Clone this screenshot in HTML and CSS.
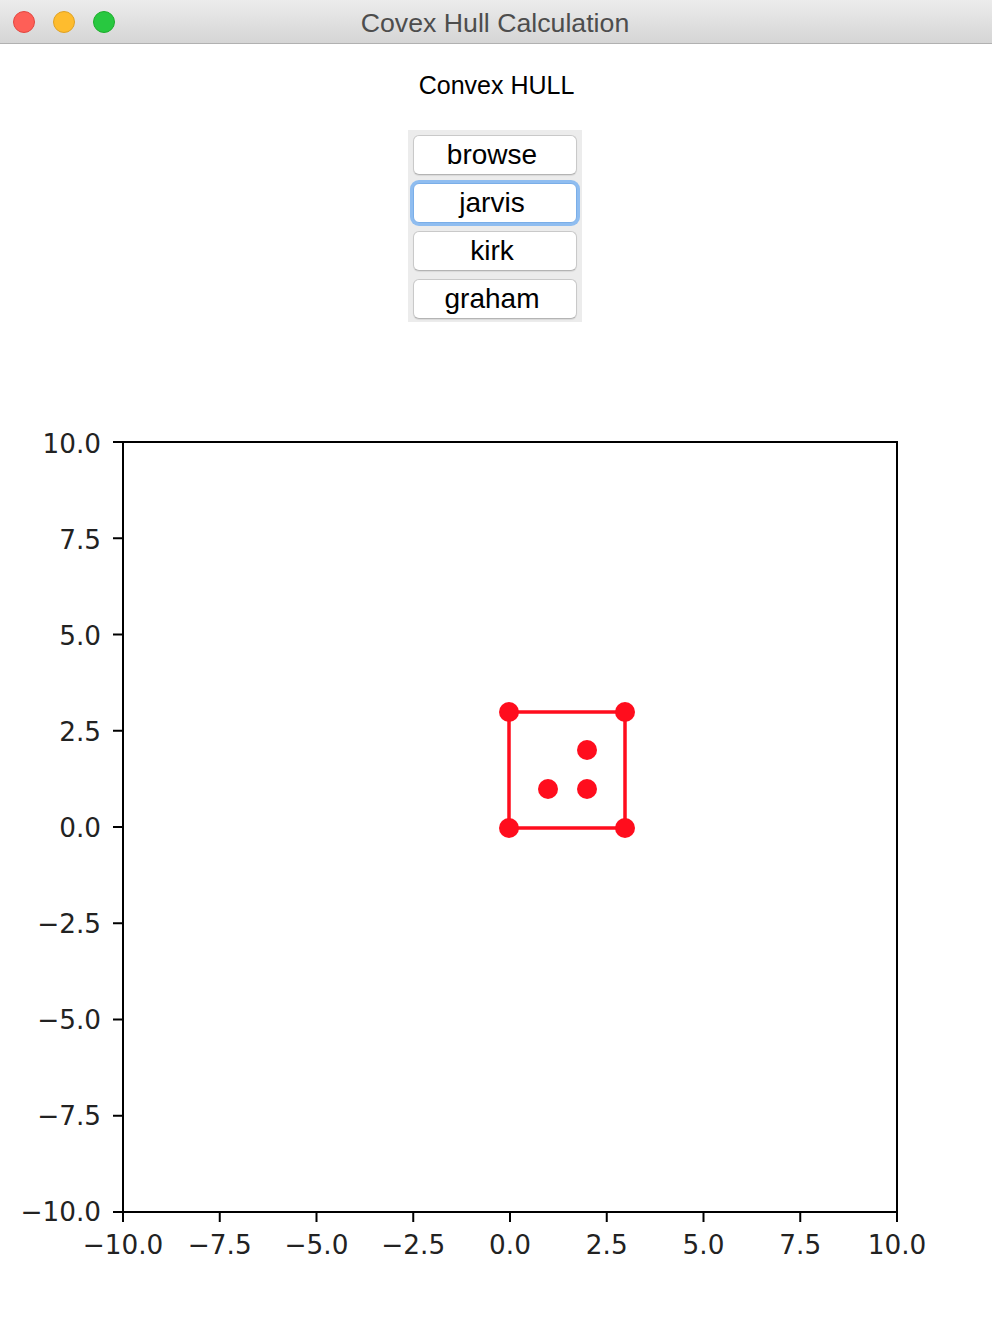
FILE: index.html
```html
<!DOCTYPE html>
<html>
<head>
<meta charset="utf-8">
<title>Covex Hull Calculation</title>
<link rel="stylesheet" href="styles.css">
</head>
<body>
<div class="window">
  <header class="titlebar">
    <div class="lights">
      <span class="light red"></span>
      <span class="light yellow"></span>
      <span class="light green"></span>
    </div>
    <div class="wtitle">Covex Hull Calculation</div>
  </header>
  <div class="label">Convex HULL</div>
  <div class="panel-wrap">
    <div class="panel">
      <button class="btn">browse</button>
      <button class="btn focus">jarvis</button>
      <button class="btn">kirk</button>
      <button class="btn">graham</button>
    </div>
  </div>
  <svg class="plot" viewBox="0 340 992 980" width="992" height="980">
    <g class="ticks">
      <line x1="113" y1="442" x2="123" y2="442"/>
      <line x1="113" y1="538.25" x2="123" y2="538.25"/>
      <line x1="113" y1="634.5" x2="123" y2="634.5"/>
      <line x1="113" y1="730.75" x2="123" y2="730.75"/>
      <line x1="113" y1="827" x2="123" y2="827"/>
      <line x1="113" y1="923.25" x2="123" y2="923.25"/>
      <line x1="113" y1="1019.5" x2="123" y2="1019.5"/>
      <line x1="113" y1="1115.75" x2="123" y2="1115.75"/>
      <line x1="113" y1="1212" x2="123" y2="1212"/>
      <line x1="123" y1="1212" x2="123" y2="1222"/>
      <line x1="219.75" y1="1212" x2="219.75" y2="1222"/>
      <line x1="316.5" y1="1212" x2="316.5" y2="1222"/>
      <line x1="413.25" y1="1212" x2="413.25" y2="1222"/>
      <line x1="510" y1="1212" x2="510" y2="1222"/>
      <line x1="606.75" y1="1212" x2="606.75" y2="1222"/>
      <line x1="703.5" y1="1212" x2="703.5" y2="1222"/>
      <line x1="800.25" y1="1212" x2="800.25" y2="1222"/>
      <line x1="897" y1="1212" x2="897" y2="1222"/>
    </g>
    <rect class="axes" x="123" y="442" width="774" height="770"/>
    <g class="ylab">
      <text x="101" y="453">10.0</text>
      <text x="101" y="549">7.5</text>
      <text x="101" y="645">5.0</text>
      <text x="101" y="741">2.5</text>
      <text x="101" y="837">0.0</text>
      <text x="101" y="933">−2.5</text>
      <text x="101" y="1029">−5.0</text>
      <text x="101" y="1125">−7.5</text>
      <text x="101" y="1221">−10.0</text>
    </g>
    <g class="xlab">
      <text x="123" y="1254">−10.0</text>
      <text x="219.75" y="1254">−7.5</text>
      <text x="316.5" y="1254">−5.0</text>
      <text x="413.25" y="1254">−2.5</text>
      <text x="510" y="1254">0.0</text>
      <text x="606.75" y="1254">2.5</text>
      <text x="703.5" y="1254">5.0</text>
      <text x="800.25" y="1254">7.5</text>
      <text x="897" y="1254">10.0</text>
    </g>
    <polygon class="hull" points="509,828 625,828 625,712 509,712"/>
    <g class="pts">
      <circle cx="509" cy="828" r="10"/>
      <circle cx="625" cy="828" r="10"/>
      <circle cx="625" cy="712" r="10"/>
      <circle cx="509" cy="712" r="10"/>
      <circle cx="587" cy="750" r="10"/>
      <circle cx="548" cy="789" r="10"/>
      <circle cx="587" cy="789" r="10"/>
    </g>
  </svg>
</div>
</body>
</html>
```

FILE: styles.css
```css
html, body {
  margin: 0;
  padding: 0;
  background: #ffffff;
}
.window {
  width: 992px;
  height: 1320px;
  overflow: hidden;
  background: #ffffff;
  font-family: "Liberation Sans", Arial, sans-serif;
}
.titlebar {
  position: relative;
  height: 43px;
  background: linear-gradient(#ececec, #d5d5d5);
  border-bottom: 1px solid #b1b1b1;
  display: flex;
  align-items: center;
  justify-content: center;
}
.lights {
  position: absolute;
  left: 13px;
  top: 11px;
  display: flex;
  gap: 18px;
}
.light {
  width: 22px;
  height: 22px;
  border-radius: 50%;
  box-sizing: border-box;
}
.red { background: #fe5f57; border: 1px solid #e2463f; }
.yellow { background: #febc2e; border: 1px solid #dfa123; }
.green { background: #28c840; border: 1px solid #1dad2b; }
.wtitle {
  font-size: 26.7px;
  color: #4d4d4d;
  margin-left: -2px;
  padding-top: 3px;
}
.label {
  margin-top: 26px;
  text-align: center;
  font-size: 25px;
  line-height: 30px;
  color: #000;
  padding-left: 1px;
}
.panel-wrap {
  display: flex;
  justify-content: center;
  margin-top: 30px;
  padding-right: 2px;
}
.panel {
  background: #ececec;
  width: 174px;
  box-sizing: border-box;
  padding: 5px 5px 3px 5px;
  display: flex;
  flex-direction: column;
  gap: 8px;
}
.btn {
  height: 40px;
  width: 164px;
  margin: 0;
  background: #ffffff;
  border: 1px solid #c9c9c9;
  border-bottom-color: #b4b4b4;
  border-radius: 6px;
  box-shadow: 0 1px 1px rgba(0,0,0,0.08);
  font-family: "Liberation Sans", Arial, sans-serif;
  font-size: 28px;
  color: #000;
  padding: 0 6px 0 0;
  line-height: 38px;
}
.btn.focus {
  box-shadow: 0 0 0 3px #8fbdf0;
  border-color: #7aaee8;
}
.plot {
  display: block;
  margin-top: 18px;
}
.axes {
  fill: none;
  stroke: #000;
  stroke-width: 2;
}
.ticks line {
  stroke: #000;
  stroke-width: 2;
}
.ylab text, .xlab text {
  font-family: "DejaVu Sans", sans-serif;
  font-size: 26.3px;
  fill: #222;
}
.ylab text { text-anchor: end; }
.xlab text { text-anchor: middle; }
.hull {
  fill: none;
  stroke: #ff0d1d;
  stroke-width: 3.5;
}
.pts circle {
  fill: #ff0d1d;
}
```
